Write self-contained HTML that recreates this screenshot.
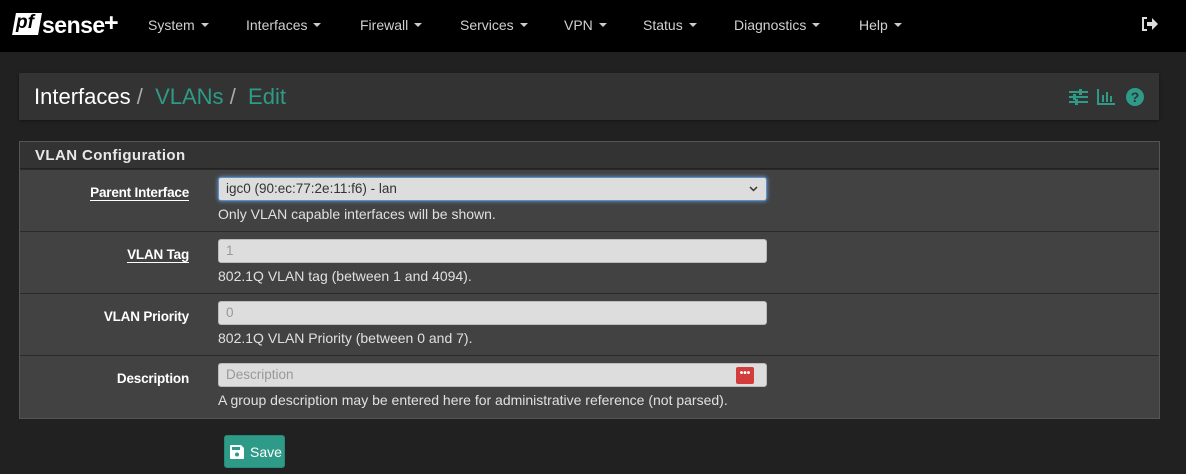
<!DOCTYPE html>
<html><head><meta charset="utf-8"><style>
*{box-sizing:border-box;margin:0;padding:0}
body{width:1186px;height:474px;background:#212121;font-family:"Liberation Sans",sans-serif;color:#e8e8e8;overflow:hidden;position:relative}
.nav{position:absolute;left:0;top:0;width:1186px;height:52px;background:#000}
.nav .it{position:absolute;top:17px;font-size:14px;color:#d0d0d0}
.caret{display:inline-block;width:0;height:0;border-left:4px solid transparent;border-right:4px solid transparent;border-top:4px solid #ccc;margin-left:6px;vertical-align:3px}
.bc{position:absolute;left:19px;top:73px;width:1140px;height:47px;background:#333;box-shadow:0 1px 3px rgba(0,0,0,.4)}
.bc .t{position:absolute;left:15px;top:11px;font-size:22px;color:#fff}
.bc .t span{color:#2d9b87}
.bc .t i{font-style:normal;color:#aaa}
.panel{position:absolute;left:19px;top:141px;width:1141px;height:278px;background:#424242;border:1px solid #555}
.ph{height:27px;background:#333;border-bottom:1px solid #222;font-weight:bold;font-size:15px;padding:5px 15px;letter-spacing:.4px}
.row{position:absolute;left:0;width:1139px;height:62px;border-top:1px solid #2a2a2a}
.lab{position:absolute;right:970px;top:15px;font-size:13.5px;font-weight:bold;color:#fff;letter-spacing:-.2px}
.lab.u{border-bottom:1px solid #fff}
.inp{position:absolute;left:198px;top:7px;width:549px;height:24px;background:#ddd;border-radius:3px;border:1px solid #bbb;font-size:13.5px;color:#999;padding:3px 7px}
.help{position:absolute;left:198px;top:36px;font-size:14px;color:#e0e0e0}
</style></head><body>
<div class="nav">
 <div style="position:absolute;left:14px;top:13px;width:26px;height:22px;background:#fff;transform:skewX(-10deg)"></div>
 <div style="position:absolute;left:16px;top:12px;font-size:19px;font-weight:bold;font-style:italic;color:#000">pf</div>
 <div style="position:absolute;left:42px;top:12px;font-size:23px;font-weight:bold;color:#fff;letter-spacing:-.5px">sense</div>
 <div style="position:absolute;left:104px;top:9px;font-size:25px;font-weight:bold;color:#fff">+</div>
 <div class="it" style="left:148px">System<span class="caret"></span></div>
 <div class="it" style="left:246px">Interfaces<span class="caret"></span></div>
 <div class="it" style="left:360px">Firewall<span class="caret"></span></div>
 <div class="it" style="left:460px">Services<span class="caret"></span></div>
 <div class="it" style="left:564px">VPN<span class="caret"></span></div>
 <div class="it" style="left:643px">Status<span class="caret"></span></div>
 <div class="it" style="left:734px">Diagnostics<span class="caret"></span></div>
 <div class="it" style="left:859px">Help<span class="caret"></span></div>
 <svg style="position:absolute;left:1141px;top:16px" width="18" height="16" viewBox="0 0 18 16"><path d="M6 2H2v12h4" stroke="#ddd" stroke-width="2" fill="none"/><path d="M6 6h5V2l6 6-6 6v-4H6z" fill="#ddd"/></svg>
</div>
<div class="bc">
 <div class="t">Interfaces <i>/</i>&nbsp; <span>VLANs</span> <i>/</i>&nbsp; <span>Edit</span></div>
 <svg style="position:absolute;left:1050px;top:16px" width="19" height="16" viewBox="0 0 19 16" fill="#2d9b87"><rect y="2" width="19" height="2"/><rect y="7" width="19" height="2"/><rect y="12" width="19" height="2"/><rect x="10" y="0" width="3" height="6"/><rect x="4" y="5" width="3" height="6"/><rect x="6" y="10" width="3" height="6"/></svg>
 <svg style="position:absolute;left:1078px;top:16px" width="18" height="16" viewBox="0 0 18 16" fill="#2d9b87"><rect y="0" width="2" height="16"/><rect y="14" width="18" height="2"/><rect x="5" y="6" width="2" height="7"/><rect x="9" y="3" width="2" height="10"/><rect x="13" y="7" width="2" height="6"/></svg>
 <div style="position:absolute;left:1107px;top:15px;width:18px;height:18px;border-radius:50%;background:#2d9b87;color:#333;font-weight:bold;font-size:14px;text-align:center;line-height:18px">?</div>
</div>
<div class="panel">
 <div class="ph">VLAN Configuration</div>
 <div class="row" style="top:27px">
  <div class="lab u">Parent Interface</div>
  <div class="inp" style="color:#333;border:1px solid #5b8fc7;box-shadow:0 0 4px #6aa0d8">igc0 (90:ec:77:2e:11:f6) - lan<svg style="position:absolute;right:8px;top:8px" width="9" height="6"><path d="M1 1l3.5 3.5L8 1" stroke="#333" stroke-width="1.5" fill="none"/></svg></div>
  <div class="help">Only VLAN capable interfaces will be shown.</div>
 </div>
 <div class="row" style="top:89px">
  <div class="lab u">VLAN Tag</div>
  <div class="inp">1</div>
  <div class="help">802.1Q VLAN tag (between 1 and 4094).</div>
 </div>
 <div class="row" style="top:151px">
  <div class="lab">VLAN Priority</div>
  <div class="inp">0</div>
  <div class="help">802.1Q VLAN Priority (between 0 and 7).</div>
 </div>
 <div class="row" style="top:213px">
  <div class="lab">Description</div>
  <div class="inp">Description<div style="position:absolute;right:12px;top:3px;width:18px;height:17px;background:#d33c3c;border-radius:2px;color:#fff;font-size:10px;line-height:14px;text-align:center;font-weight:bold">•••</div></div>
  <div class="help">A group description may be entered here for administrative reference (not parsed).</div>
 </div>
</div>
<div style="position:absolute;left:224px;top:435px;width:61px;height:33px;background:#2d9b87;border-radius:3px;border:1px solid #278a78">
 <svg style="position:absolute;left:5px;top:9px" width="14" height="14" viewBox="0 0 14 14"><path d="M0 1a1 1 0 011-1h10l3 3v10a1 1 0 01-1 1H1a1 1 0 01-1-1z" fill="#fff"/><rect x="2" y="2" width="8" height="3" fill="#2d9b87"/><circle cx="7" cy="9.5" r="2" fill="#2d9b87"/></svg>
 <div style="position:absolute;left:25px;top:8px;font-size:14px;color:#fff">Save</div>
</div>
</body></html>
